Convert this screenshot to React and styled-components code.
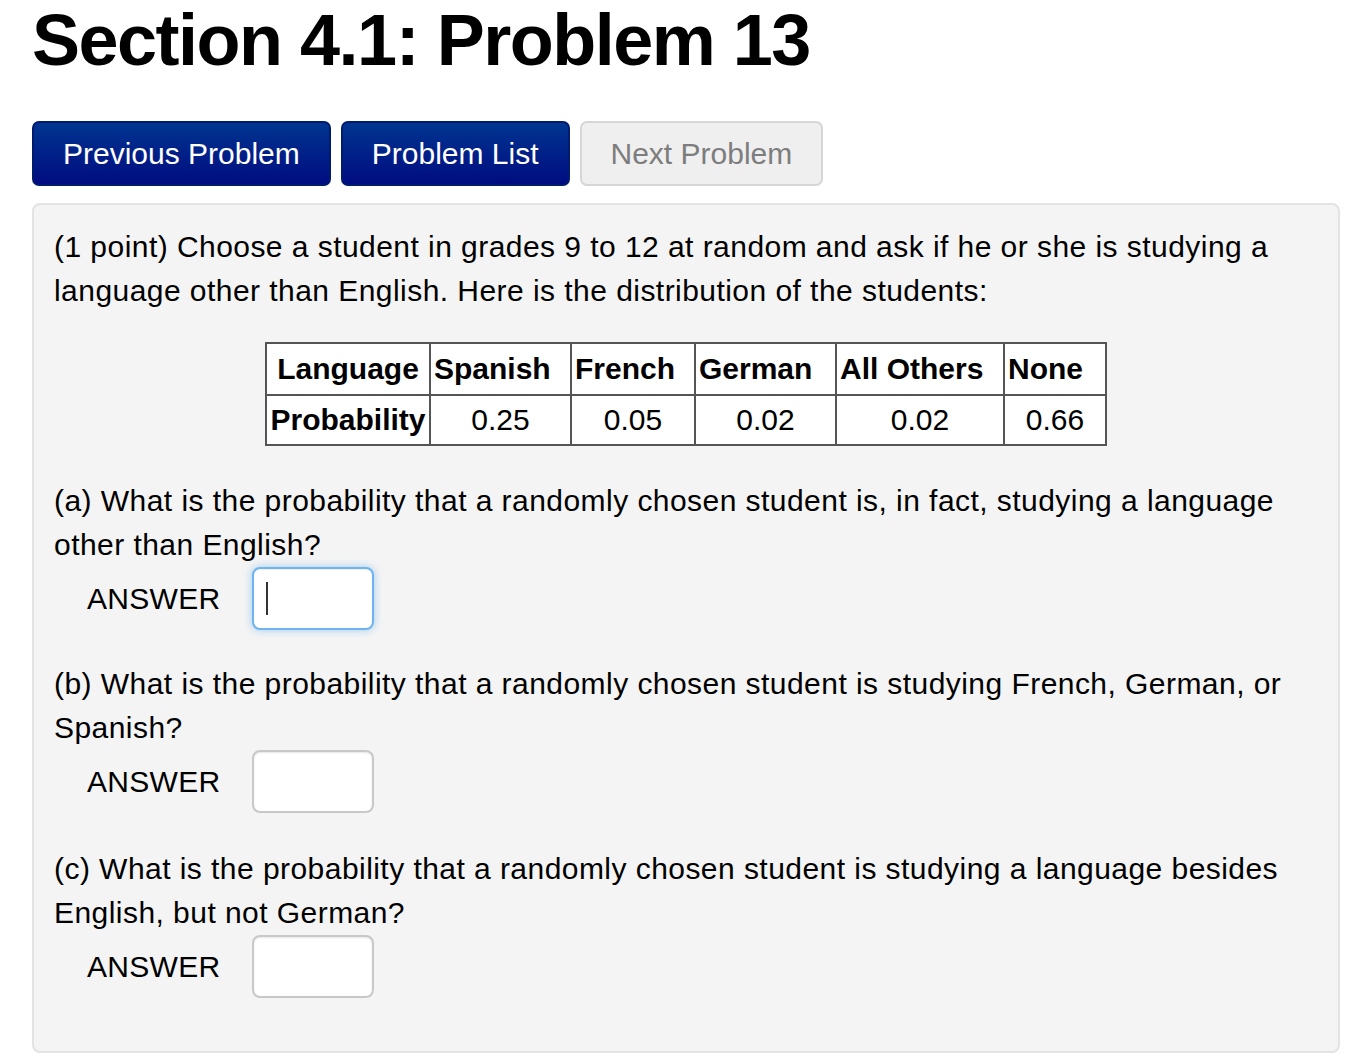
import React from "react";
import styled, { createGlobalStyle } from "styled-components";

const Global = createGlobalStyle`
  html, body { margin: 0; padding: 0; background: #fff; }
  body { font-family: "Liberation Sans", Arial, Helvetica, sans-serif; color: #000; }
`;

const Page = styled.div`
  padding: 0 18px 0 32px;
  display: flex;
  flex-direction: column;
`;

const Title = styled.h1`
  margin: 0;
  font-size: 72px;
  font-weight: bold;
  line-height: 80px;
  letter-spacing: -1.5px;
`;

const NavBar = styled.div`
  display: flex;
  gap: 10px;
  margin-top: 41px;
`;

const NavButton = styled.button`
  height: 65px;
  padding: 0 ${(p) => p.$pad || 29}px;
  border-radius: 7px;
  font-family: inherit;
  font-size: 30px;
  border: 2px solid ${(p) => (p.$disabled ? "#d6d6d6" : "#001a6e")};
  color: ${(p) => (p.$disabled ? "#7d7d7d" : "#fff")};
  background: ${(p) =>
    p.$disabled ? "#efefef" : "linear-gradient(to bottom, #003590 0%, #000c80 100%)"};
`;

const Panel = styled.div`
  margin-top: 17px;
  background: #f4f4f4;
  border: 2px solid #e3e3e3;
  border-radius: 8px;
  padding: 20px 20px 53px 20px;
  font-size: 30px;
  line-height: 44px;
`;

const Para = styled.p`
  margin: 0;
  letter-spacing: 0.45px;
`;

const TableWrap = styled.div`
  display: flex;
  justify-content: center;
  margin: 29px 0 33px;
`;

const Table = styled.table`
  border-collapse: collapse;
  border: 2px solid #555;
  background: #fff;
  table-layout: fixed;
`;

const Cell = styled.td`
  border: 2px solid #555;
  height: ${(p) => p.$h}px;
  padding: 0 ${(p) => p.$pad ?? 3}px;
  font-weight: ${(p) => (p.$bold ? "bold" : "normal")};
  text-align: ${(p) => p.$align || "center"};
  width: ${(p) => p.$w}px;
  box-sizing: border-box;
  line-height: 40px;
  white-space: nowrap;
  overflow: hidden;
`;

const AnswerRow = styled.div`
  display: flex;
  align-items: center;
  padding-left: 33px;
  margin-bottom: ${(p) => p.$mb || 0}px;
`;

const AnswerLabel = styled.span`
  width: 165px;
  letter-spacing: 0.3px;
`;

const InputBox = styled.div`
  position: relative;
`;

const AnswerInput = styled.input`
  display: block;
  width: 122px;
  height: 63px;
  box-sizing: border-box;
  border-radius: 8px;
  background: #fff;
  font-size: 28px;
  font-family: inherit;
  padding: 0 12px;
  outline: none;
  border: 2px solid ${(p) => (p.$focus ? "#6eb4f0" : "#c8c8c8")};
  box-shadow: ${(p) =>
    p.$focus
      ? "inset 0 1px 1px rgba(0,0,0,.075), 0 0 8px rgba(102,175,233,.6)"
      : "inset 0 1px 2px rgba(0,0,0,.1)"};
`;

const Caret = styled.span`
  position: absolute;
  left: 14px;
  top: 15px;
  width: 2px;
  height: 33px;
  background: #333;
`;

const cols = [
  { h: "Language", v: "Probability", w: 164, first: true },
  { h: "Spanish", v: "0.25", w: 141 },
  { h: "French", v: "0.05", w: 124 },
  { h: "German", v: "0.02", w: 141 },
  { h: "All Others", v: "0.02", w: 168 },
  { h: "None", v: "0.66", w: 102 },
];

export default function App() {
  return (
    <>
      <Global />
      <Page>
        <Title>Section 4.1: Problem 13</Title>
        <NavBar>
          <NavButton>Previous Problem</NavButton>
          <NavButton>Problem List</NavButton>
          <NavButton $disabled>Next Problem</NavButton>
        </NavBar>
        <Panel>
          <Para>
            (1 point) Choose a student in grades 9 to 12 at random and ask if he or she is studying a
            language other than English. Here is the distribution of the students:
          </Para>
          <TableWrap>
            <Table>
              <tbody>
                <tr>
                  {cols.map((c) => (
                    <Cell
                      key={c.h}
                      $bold
                      $h={52}
                      $align={c.first ? "center" : "left"}
                      $w={c.w}
                      $pad={c.first ? 0 : 3}
                    >
                      {c.h}
                    </Cell>
                  ))}
                </tr>
                <tr>
                  {cols.map((c) => (
                    <Cell key={c.h} $h={50} $bold={c.first} $w={c.w} $pad={c.first ? 0 : 3}>
                      {c.v}
                    </Cell>
                  ))}
                </tr>
              </tbody>
            </Table>
          </TableWrap>
          <Para>
            (a) What is the probability that a randomly chosen student is, in fact, studying a language
            other than English?
          </Para>
          <AnswerRow $mb={32}>
            <AnswerLabel>ANSWER</AnswerLabel>
            <InputBox>
              <AnswerInput $focus />
              <Caret />
            </InputBox>
          </AnswerRow>
          <Para>
            (b) What is the probability that a randomly chosen student is studying French, German, or
            Spanish?
          </Para>
          <AnswerRow $mb={34}>
            <AnswerLabel>ANSWER</AnswerLabel>
            <InputBox>
              <AnswerInput />
            </InputBox>
          </AnswerRow>
          <Para>
            (c) What is the probability that a randomly chosen student is studying a language besides
            English, but not German?
          </Para>
          <AnswerRow>
            <AnswerLabel>ANSWER</AnswerLabel>
            <InputBox>
              <AnswerInput />
            </InputBox>
          </AnswerRow>
        </Panel>
      </Page>
    </>
  );
}
